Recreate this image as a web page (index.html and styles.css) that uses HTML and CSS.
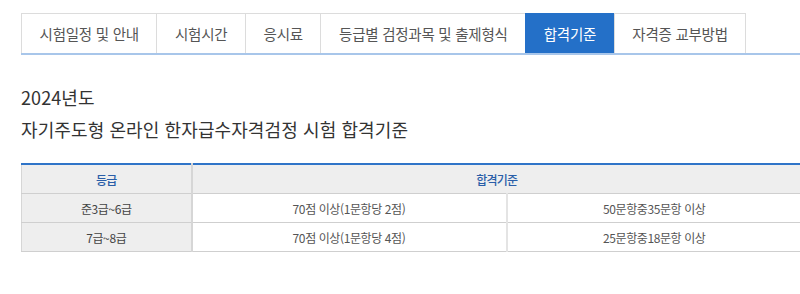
FILE: index.html
```html
<!DOCTYPE html>
<html lang="ko">
<head>
    <meta charset="UTF-8">
    <meta name="viewport" content="width=device-width, initial-scale=1.0">
    <title>합격기준</title>
    <link rel="stylesheet" href="styles.css">
</head>
<body>
    <div class="wrap">
        <ul class="tabs">
            <li class="tab">시험일정 및 안내</li>
            <li class="tab">시험시간</li>
            <li class="tab">응시료</li>
            <li class="tab">등급별 검정과목 및 출제형식</li>
            <li class="tab active">합격기준</li>
            <li class="tab">자격증 교부방법</li>
        </ul>

        <h2 class="title">2024년도<br>자기주도형 온라인 한자급수자격검정 시험 합격기준</h2>

        <table class="pass-table">
            <colgroup>
                <col class="col-grade">
                <col class="col-score">
                <col class="col-count">
            </colgroup>
            <thead>
                <tr>
                    <th>등급</th>
                    <th colspan="2">합격기준</th>
                </tr>
            </thead>
            <tbody>
                <tr>
                    <th>준3급~6급</th>
                    <td>70점 이상(1문항당 2점)</td>
                    <td>50문항중35문항 이상</td>
                </tr>
                <tr>
                    <th>7급~8급</th>
                    <td>70점 이상(1문항당 4점)</td>
                    <td>25문항중18문항 이상</td>
                </tr>
            </tbody>
        </table>
    </div>
</body>
</html>
```

FILE: styles.css
```css
html {
    overflow: hidden;
}

body {
    margin: 0;
    background: #fff;
    font-family: "Noto Sans CJK KR", "Noto Sans", sans-serif;
    color: #333;
}

.wrap {
    width: 780px;
    padding: 13px 0 0 21px;
}

/* tab menu */
.tabs {
    display: flex;
    margin: 0;
    padding: 0;
    list-style: none;
    border-bottom: 2px solid #a8c6ea;
}

.tab {
    height: 39px;
    padding: 0 17.6px;
    display: flex;
    align-items: center;
    border-top: 1px solid #dcdcdc;
    border-left: 1px solid #dcdcdc;
    font-size: 14.5px;
    letter-spacing: -0.25px;
    color: #555;
}

.tab:last-child {
    border-right: 1px solid #dcdcdc;
}

.tab.active {
    background: #2470c8;
    border-color: #2470c8;
    color: #fff;
}

/* heading */
.title {
    margin: 26px 0 18px;
    font-size: 18px;
    font-weight: 400;
    line-height: 32px;
    letter-spacing: 0.1px;
    color: #333;
}

/* criteria table */
.pass-table {
    width: 780px;
    border-collapse: collapse;
    border-top: 2px solid #2f74c8;
    table-layout: fixed;
    font-size: 12px;
    letter-spacing: -0.4px;
}

.col-grade {
    width: 170px;
}

.col-score {
    width: 315px;
}

.pass-table th,
.pass-table td {
    height: 28px;
    padding: 0;
    text-align: center;
    font-weight: 400;
    border-bottom: 1px solid #cfcfcf;
}

.pass-table thead th {
    background: #eee;
    color: #2a5ea8;
    font-weight: 500;
    letter-spacing: -0.8px;
}

.pass-table tbody th {
    background: #eee;
    color: #444;
    border-left: 1px solid #d6d6d6;
}

.pass-table thead th:first-child {
    border-left: 1px solid #d6d6d6;
}

.pass-table th:first-child {
    border-right: 2px solid #d6d6d6;
}

.pass-table td {
    color: #555;
}

.pass-table td + td {
    border-left: 2px solid #e4e4e4;
}
```
